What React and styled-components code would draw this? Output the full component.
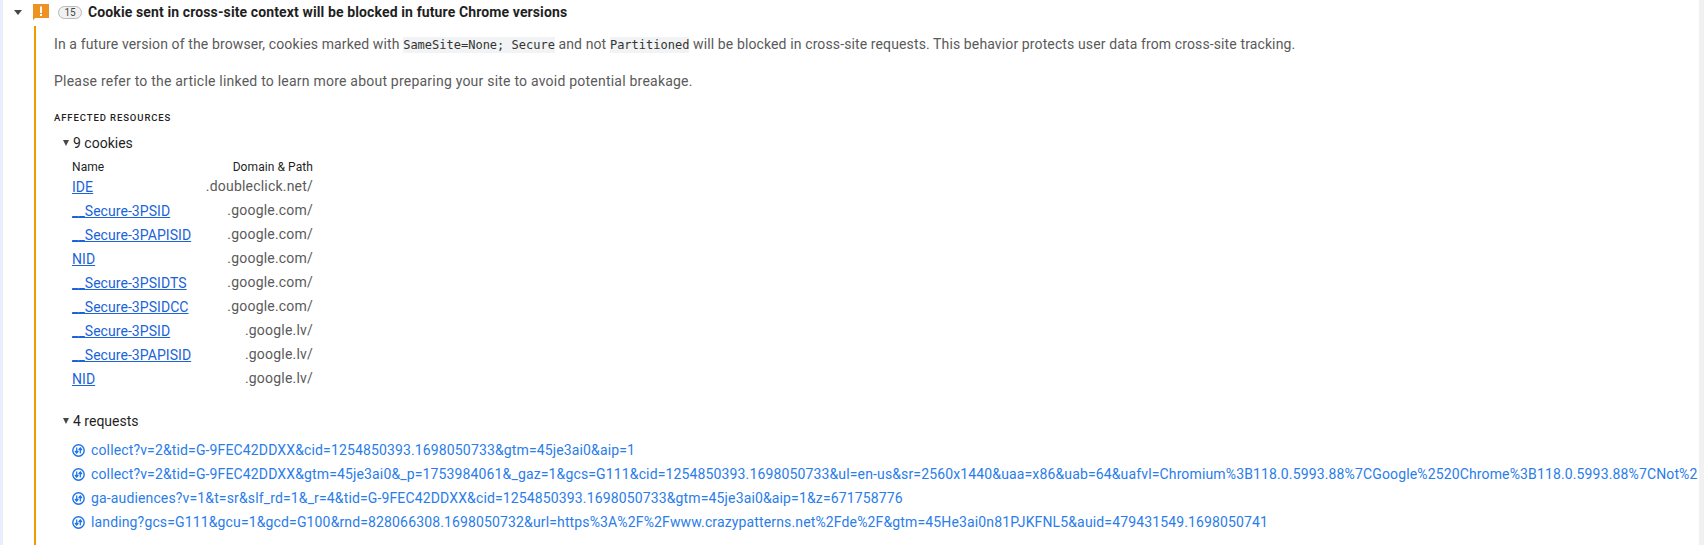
import React from 'react';
import styled, { createGlobalStyle } from 'styled-components';

const GlobalStyle = createGlobalStyle`
    html, body {
        margin: 0;
        padding: 0;
        height: 100%;
        background: white;
        overflow: hidden;
    }
`
const Page = styled.div`
    display: flex;
    width: 1704px;
    height: 545px;
    overflow: hidden;
    font-family: Roboto, "Liberation Sans", sans-serif;
    font-size: 14px;
    color: #5a5a5a;
`
const Content = styled.div`
    flex: 1;
    min-width: 0;
    overflow: hidden;
`
const LeftEdge = styled.div`
    flex: none;
    width: 3px;
    background: #e8eefc;
`
const ScrollTrack = styled.div`
    flex: none;
    width: 5px;
    background: #f1f1f1;
`
const Header = styled.div`
    display: flex;
    align-items: center;
    height: 24px;
    margin-bottom: 2px;
    padding-left: 11px;
    color: #1f1f1f;
    font-weight: 700;
    font-size: 14px;
    letter-spacing: 0.12px;
    white-space: nowrap;
`
const Arrow = styled.span`
    flex: none;
    width: 0;
    height: 0;
    border-left: 3.5px solid transparent;
    border-right: 3.5px solid transparent;
    border-top: ${p => p.tall}px solid #474747;
`
const ArrowGap = styled.span`
    width: 11px;
`
const HeaderArrow = styled(Arrow)`
    border-left-width: 4px;
    border-right-width: 4px;
`
const Count = styled.span`
    display: inline-flex;
    align-items: center;
    justify-content: center;
    box-sizing: border-box;
    width: 24px;
    height: 13px;
    margin: 0 6px 0 9px;
    border: 1px solid #b9b9b9;
    border-radius: 7px;
    background: #f1f1f1;
    color: #474747;
    font-size: 10px;
    font-weight: 400;
    letter-spacing: 0;
`
const Body = styled.div`
    margin-left: 31px;
    border-left: 2px solid #f29900;
    padding: 10px 0 0 18px;
    height: 519px;
    box-sizing: border-box;
`
const Paragraph = styled.p`
    margin: 0 0 19px;
    line-height: 17px;
    letter-spacing: ${p => p.spread}px;
    white-space: nowrap;
`
const Code = styled.code`
    font-family: "DejaVu Sans Mono", monospace;
    font-size: 12px;
    letter-spacing: 0;
    background: #f1f3f4;
    color: #333333;
    padding: 1px 0;
`
const SectionTitle = styled.div`
    margin-top: 21px;
    color: #1f1f1f;
    font-size: 9.5px;
    font-weight: 500;
    letter-spacing: 0.9px;
    line-height: 13px;
    text-transform: uppercase;
`
const Group = styled.div`
    margin-top: ${p => p.top}px;
    padding-left: 9px;
`
const GroupTitle = styled.div`
    display: flex;
    align-items: center;
    gap: 4px;
    height: 18px;
    color: #1f1f1f;
`
const CookieTable = styled.div`
    display: grid;
    grid-template-columns: 183px 58px;
    grid-template-rows: 18px;
    grid-auto-rows: 24px;
    margin: 6px 0 0 9px;
`
const ColumnHead = styled.div`
    justify-self: ${p => p.right ? 'end' : 'start'};
    line-height: 19px;
    font-size: 12px;
    letter-spacing: 0.08px;
    color: #1f1f1f;
    white-space: nowrap;
`
const CookieLink = styled.a`
    display: block;
    color: #1a63d8;
    text-decoration: underline;
    letter-spacing: 0.06px;
    line-height: 23px;
    white-space: nowrap;
`
const Domain = styled.div`
    justify-self: end;
    line-height: 21px;
    letter-spacing: 0.2px;
    white-space: nowrap;
`
const RequestList = styled.div`
    margin: 8px 0 0 9px;
`
const RequestRow = styled.div`
    display: flex;
    align-items: center;
    gap: 6px;
    height: 24px;
    color: #2a7de9;
    letter-spacing: 0.14px;
    white-space: nowrap;
`
const RequestSvg = styled.svg`
    flex: none;
`

const WarningBadge = () => (
    <svg width="16" height="17" viewBox="0 0 16 17">
        <path d="M0 0h16v14H2l-2 2.5z" fill="#ee9322" />
        <rect x="7" y="2.5" width="2" height="6.5" fill="white" />
        <rect x="7" y="10" width="2" height="2" fill="white" />
    </svg>
)

const RequestIcon = () => (
    <RequestSvg width="13" height="13" viewBox="0 0 13 13">
        <circle cx="6.5" cy="6.5" r="5.7" fill="none" stroke="#1a73e8" strokeWidth="1.4" />
        <path d="M4.7 3.5v5.2M3 7l1.7 2L6.4 7M8.3 9.5V4.3M6.6 6l1.7-2L10 6" fill="none" stroke="#1a73e8" strokeWidth="1.2" />
    </RequestSvg>
)

const cookies = [
    ['IDE', '.doubleclick.net/'],
    ['__Secure-3PSID', '.google.com/'],
    ['__Secure-3PAPISID', '.google.com/'],
    ['NID', '.google.com/'],
    ['__Secure-3PSIDTS', '.google.com/'],
    ['__Secure-3PSIDCC', '.google.com/'],
    ['__Secure-3PSID', '.google.lv/'],
    ['__Secure-3PAPISID', '.google.lv/'],
    ['NID', '.google.lv/'],
]

const requests = [
    'collect?v=2&tid=G-9FEC42DDXX&cid=1254850393.1698050733&gtm=45je3ai0&aip=1',
    'collect?v=2&tid=G-9FEC42DDXX&gtm=45je3ai0&_p=1753984061&_gaz=1&gcs=G111&cid=1254850393.1698050733&ul=en-us&sr=2560x1440&uaa=x86&uab=64&uafvl=Chromium%3B118.0.5993.88%7CGoogle%2520Chrome%3B118.0.5993.88%7CNot%2',
    'ga-audiences?v=1&t=sr&slf_rd=1&_r=4&tid=G-9FEC42DDXX&cid=1254850393.1698050733&gtm=45je3ai0&aip=1&z=671758776',
    'landing?gcs=G111&gcu=1&gcd=G100&rnd=828066308.1698050732&url=https%3A%2F%2Fwww.crazypatterns.net%2Fde%2F&gtm=45He3ai0n81PJKFNL5&auid=479431549.1698050741',
]

export default function App() {
    return (
        <Page>
            <GlobalStyle />
            <LeftEdge />
            <Content>
                <Header>
                    <HeaderArrow tall={5} />
                    <ArrowGap />
                    <WarningBadge />
                    <Count>15</Count>
                    Cookie sent in cross-site context will be blocked in future Chrome versions
                </Header>
                <Body>
                    <Paragraph spread={0.12}>
                        In a future version of the browser, cookies marked with <Code>SameSite=None; Secure</Code> and not <Code>Partitioned</Code> will be blocked in cross-site requests. This behavior protects user data from cross-site tracking.
                    </Paragraph>
                    <Paragraph spread={0.22}>
                        Please refer to the article linked to learn more about preparing your site to avoid potential breakage.
                    </Paragraph>
                    <SectionTitle>Affected Resources</SectionTitle>
                    <Group top={10}>
                        <GroupTitle><Arrow tall={6} />9 cookies</GroupTitle>
                        <CookieTable>
                            <ColumnHead>Name</ColumnHead>
                            <ColumnHead right>Domain &amp; Path</ColumnHead>
                            {cookies.map((c, i) => (
                                <React.Fragment key={i}>
                                    <div><CookieLink href="#">{c[0]}</CookieLink></div>
                                    <Domain>{c[1]}</Domain>
                                </React.Fragment>
                            ))}
                        </CookieTable>
                    </Group>
                    <Group top={20}>
                        <GroupTitle><Arrow tall={6} />4 requests</GroupTitle>
                        <RequestList>
                            {requests.map((r, i) => (
                                <RequestRow key={i}><RequestIcon />{r}</RequestRow>
                            ))}
                        </RequestList>
                    </Group>
                </Body>
            </Content>
            <ScrollTrack />
        </Page>
    )
}
